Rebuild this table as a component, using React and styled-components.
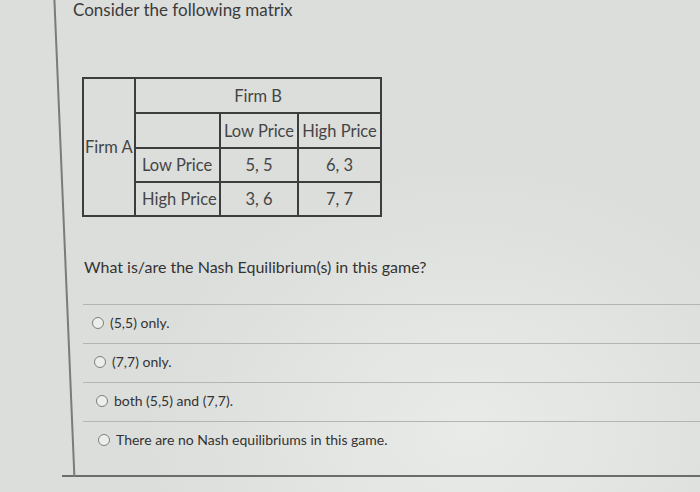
import styled, { createGlobalStyle } from "styled-components";

const GlobalStyle = createGlobalStyle`
  html, body {
    margin: 0;
    padding: 0;
  }
  body {
    width: 700px;
    height: 492px;
    overflow: hidden;
    background: radial-gradient(ellipse 320px 260px at 470px 430px, #e9ebe8 0%, #e2e4e1 55%, #dcdedb 100%);
    font-family: Lato, "Open Sans", sans-serif;
    color: #3a3a3a;
  }
`;

const options = [
  "(5,5) only.",
  "(7,7) only.",
  "both (5,5) and (7,7).",
  "There are no Nash equilibriums in this game.",
];

function App() {
  return (
    <>
      <GlobalStyle />
      <Frame>
        <Title>Consider the following matrix</Title>
        <Matrix>
          <colgroup>
            <col style={{ width: 52 }} />
            <col style={{ width: 85 }} />
            <col style={{ width: 78 }} />
            <col style={{ width: 83 }} />
          </colgroup>
          <tbody>
            <tr>
              <Cell rowSpan={4} $align="left" $pad="0 0 0 1px">
                Firm A
              </Cell>
              <Cell colSpan={3} $h={33}>
                Firm B
              </Cell>
            </tr>
            <tr>
              <Cell $h={33} />
              <Cell $h={33}>Low Price</Cell>
              <Cell $h={33}>High Price</Cell>
            </tr>
            <tr>
              <Cell $align="left" $h={32}>Low Price</Cell>
              <Cell>5, 5</Cell>
              <Cell>6, 3</Cell>
            </tr>
            <tr>
              <Cell $align="left" $h={32}>High Price</Cell>
              <Cell>3, 6</Cell>
              <Cell>7, 7</Cell>
            </tr>
          </tbody>
        </Matrix>
        <Question>What is/are the Nash Equilibrium(s) in this game?</Question>
        <Options>
          {options.map((text, i) => (
            <Option key={text} $indent={9 + i * 2}>
              <Radio />
              <span>{text}</span>
            </Option>
          ))}
        </Options>
      </Frame>
    </>
  );
}

const Frame = styled.div`
  position: relative;
  box-sizing: border-box;
  margin-left: 62px;
  height: 477px;
  padding: 0 0 0 11px;
  border-bottom: 2px solid #6b6d6a;

  &::before {
    content: "";
    position: absolute;
    left: -9px;
    top: -10px;
    bottom: -2px;
    width: 0;
    border-left: 2px solid #7a7c79;
    transform: skewX(2.4deg);
    transform-origin: top left;
  }
`;

const Title = styled.h1`
  margin: 0;
  font-size: 17px;
  font-weight: 400;
  line-height: 20px;
  color: #3b3b3b;
`;

const Matrix = styled.table`
  margin: 57px 0 0 9px;
  width: 300px;
  table-layout: fixed;
  border-collapse: collapse;
  border: 2px solid #3d3d3d;
  font-size: 16.5px;
  color: #454545;
`;

const Cell = styled.td`
  border: 2px solid #3d3d3d;
  padding: ${(p) => p.$pad || "0 0 0 6px"};
  height: ${(p) => (p.$h ? `${p.$h}px` : "auto")};
  text-align: ${(p) => p.$align || "center"};
  white-space: nowrap;
  overflow: visible;
  vertical-align: middle;
  line-height: 20px;

  ${(p) => !p.$align && "padding: 0;"}
`;

const Question = styled.p`
  margin: 40px 0 0 11px;
  font-size: 16px;
  line-height: 20px;
  color: #333;
`;

const Options = styled.div`
  margin: 27px 0 0 10px;
  display: flex;
  flex-direction: column;
`;

const Option = styled.div`
  display: flex;
  align-items: center;
  gap: 6px;
  height: 39px;
  box-sizing: border-box;
  padding: 0 0 3px ${(p) => p.$indent}px;
  border-top: 1px solid #b3b5b2;
  font-size: 14px;
  color: #333;
`;

const Radio = styled.span`
  box-sizing: border-box;
  width: 12px;
  height: 12px;
  border-radius: 50%;
  border: 1.5px solid #7d7f7c;
  background: #eceeeb;
  flex: none;
`;

export default App;
